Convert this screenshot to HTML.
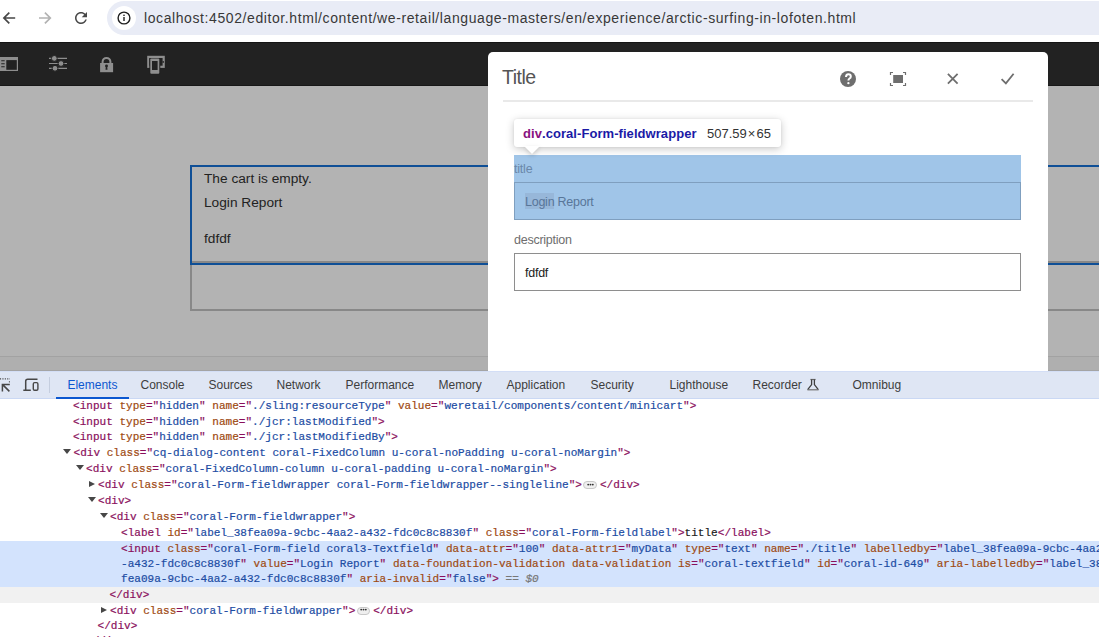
<!DOCTYPE html>
<html><head><meta charset="utf-8">
<style>
*{margin:0;padding:0;box-sizing:border-box}
html,body{width:1099px;height:637px;overflow:hidden;background:#fff;font-family:"Liberation Sans",sans-serif;position:relative}
.abs,svg.i{position:absolute;display:block}
#chrome{left:0;top:0;width:1099px;height:42px;background:#fff}
#pill{left:107px;top:1px;width:1010px;height:34px;border-radius:17px;background:#e9ecf6}
#infoc{left:112px;top:6px;width:24px;height:24px;border-radius:12px;background:#fff}
#url{left:144px;top:10px;font-size:14px;line-height:16px;color:#383838;white-space:nowrap;letter-spacing:0.59px}
#aem{left:0;top:42px;width:1099px;height:44px;background:#222;border-top:1px solid #141414;border-bottom:1px solid #181818}
#page{left:0;top:86px;width:1099px;height:285px;background:#b3b3b3}
#pline{left:0;top:356px;width:1099px;height:15px;background:#afafaf;border-top:1px solid #a2a2a2;border-bottom:1px solid #a4a4a4}
#cmp-gray{left:190px;top:261px;width:1000px;height:50px;border:2px solid #888;border-right:none}
#cmp-blue{left:190px;top:165px;width:1000px;height:100px;border:2px solid #0f4f96;border-right:none}
.ptxt{position:absolute;left:204px;font-size:13.7px;color:#222;white-space:nowrap}
#dialog{left:488px;top:52px;width:560px;height:330px;background:#fff;border-radius:5px 5px 0 0}
#dtitle{left:502px;top:66px;font-size:19.5px;letter-spacing:-0.5px;color:#555;white-space:nowrap}
#ddiv{left:503px;top:100px;width:530px;height:2px;background:#e9e9e9}
#hl{left:514px;top:155px;width:507px;height:65px;background:#a0c5e8}
#lbl1{left:514px;top:161.5px;font-size:12.5px;letter-spacing:-0.2px;color:#6a88aa;white-space:nowrap}
#tf1{left:514px;top:182px;width:507px;height:38px;border:1px solid #7f9fbf}
#sel{left:525px;top:193px;width:29px;height:15.5px;background:#97b7d9}
#tf1t{left:525px;top:194.5px;font-size:12.5px;letter-spacing:-0.25px;color:#587699;white-space:nowrap}
#lbl2{left:514px;top:233px;font-size:12.5px;letter-spacing:-0.25px;color:#6e6e6e;white-space:nowrap}
#tf2{left:514px;top:253px;width:507px;height:38px;border:1px solid #8e8e8e;background:#fff}
#tf2t{left:525px;top:266.3px;font-size:12.5px;letter-spacing:-0.25px;color:#222;white-space:nowrap}
#tip{left:514px;top:119px;width:267px;height:28px;background:#fff;border-radius:3px;box-shadow:0 2px 9px rgba(0,0,0,.22),0 0 2px rgba(0,0,0,.08)}
#tiparrow{left:524px;top:146px;width:0;height:0;border-left:8.5px solid transparent;border-right:8.5px solid transparent;border-top:8.5px solid #fff;filter:drop-shadow(0 2px 2px rgba(0,0,0,.18))}
#tipt{left:523px;top:126px;font-size:13px;font-weight:bold;color:#1a1aa6;white-space:nowrap;letter-spacing:0.06px}
#tipt b{color:#881280}
#tipd{left:707px;top:126px;font-size:13px;color:#333;white-space:nowrap}
#dt-tabs{left:0;top:371px;width:1099px;height:28px;background:#dfe6f4;border-top:1px solid #d3def6;border-bottom:1px solid #cad8f4}
#uline{left:56px;top:397px;width:73px;height:2px;background:#0b57d0}
#sep{left:49px;top:377px;width:1px;height:16px;background:#c5cedf}
.tab{position:absolute;top:378.3px;font-size:12px;line-height:14px;color:#3d3d3d;white-space:nowrap}
#code{left:0;top:399px;width:1099px;height:238px;background:#fff;overflow:hidden}
#selrow{left:0;top:541px;width:1099px;height:46px;background:#d3e3fd}
#hovrow{left:0;top:587px;width:1099px;height:16px;background:#f1f1f1}
.ln{position:absolute;white-space:pre;font-family:"Liberation Mono",monospace;font-size:11.05px;line-height:14px;color:#222;-webkit-text-stroke:0.2px currentColor}
.t{color:#8a0f5c}.a{color:#9e4a12}.v{color:#1c4ca3}.x{color:#222}
.eq{color:#777}.eq i{font-style:italic}
.el{display:inline-block;width:13.4px;height:8px;border:1px solid #c8c8c8;border-radius:4px;background:#efefef;vertical-align:-1.2px;margin:0 3.2px 0 1.3px;position:relative}.el svg{position:absolute;left:-0.8px;top:-1.3px}
.tri{position:absolute;width:0;height:0}
.tri.d{border-left:4px solid transparent;border-right:4px solid transparent;border-top:5.9px solid #474747}
.tri.r{border-top:3.9px solid transparent;border-bottom:3.9px solid transparent;border-left:6px solid #474747}
</style></head><body>
<div id="chrome" class="abs"></div>
<div id="pill" class="abs"></div>
<div id="infoc" class="abs"></div>
<!-- back -->
<svg class="i" style="left:0;top:8px" width="20" height="20" viewBox="0 0 20 20"><path d="M15.2 10H4.2M9.3 4.6L3.9 10l5.4 5.4" fill="none" stroke="#474747" stroke-width="1.7"/></svg>
<svg class="i" style="left:36px;top:8px" width="20" height="20" viewBox="0 0 20 20"><path d="M3 10H14M8.9 4.6L14.3 10l-5.4 5.4" fill="none" stroke="#b2b2b2" stroke-width="1.7"/></svg>
<svg class="i" style="left:72px;top:9px" width="18" height="18" viewBox="0 0 24 24"><path fill="#474747" d="M17.65 6.35C16.2 4.9 14.21 4 12 4c-4.42 0-7.99 3.58-7.99 8s3.57 8 7.99 8c3.73 0 6.84-2.55 7.73-6h-2.08c-.82 2.33-3.04 4-5.65 4-3.31 0-6-2.69-6-6s2.69-6 6-6c1.66 0 3.14.69 4.22 1.78L13 11h7V4l-2.35 2.35z"/></svg>
<svg class="i" style="left:114px;top:8px" width="20" height="20" viewBox="0 0 20 20"><circle cx="10" cy="10" r="5.9" fill="none" stroke="#1f1f1f" stroke-width="1.4"/><rect x="9.3" y="9" width="1.4" height="4" fill="#1f1f1f"/><rect x="9.3" y="6.6" width="1.4" height="1.4" fill="#1f1f1f"/></svg>
<div id="url" class="abs">localhost:4502/editor.html/content/we-retail/language-masters/en/experience/arctic-surfing-in-lofoten.html</div>

<div id="aem" class="abs"></div>
<!-- aem icons -->
<svg class="i" style="left:0;top:56px" width="20" height="16" viewBox="0 0 20 16"><rect x="0" y="1" width="18" height="14" fill="#8e8e8e"/><rect x="6.3" y="4.1" width="10.5" height="9.7" fill="#222"/><rect x="1.1" y="4.2" width="3.7" height="1.1" rx="0.5" fill="#222"/><rect x="1.1" y="7.2" width="3.7" height="1.1" rx="0.5" fill="#222"/><rect x="1.1" y="10.2" width="3.7" height="1.1" rx="0.5" fill="#222"/></svg>
<svg class="i" style="left:48px;top:54px" width="20" height="19" viewBox="0 0 20 19"><g stroke="#8e8e8e" stroke-width="1.2"><path d="M1 4.4H19M1 9.5H19M1 14.3H19"/></g><g fill="#8e8e8e" stroke="#222" stroke-width="1"><circle cx="6.3" cy="4.4" r="2.9"/><circle cx="13" cy="9.5" r="2.9"/><circle cx="7" cy="14.3" r="2.9"/></g></svg>
<svg class="i" style="left:99px;top:56px" width="16" height="17" viewBox="0 0 16 17"><path d="M3.6 7.5V5.8a3.9 3.9 0 0 1 7.8 0V7.5" fill="none" stroke="#8e8e8e" stroke-width="2"/><rect x="1.1" y="7" width="13" height="9.2" fill="#8e8e8e"/><circle cx="7.5" cy="10" r="1.45" fill="#222"/><path d="M6.8 10.5H8.2L8.5 13.7H6.5Z" fill="#222"/></svg>
<svg class="i" style="left:146px;top:55px" width="20" height="20" viewBox="0 0 20 20"><rect x="2.3" y="1.9" width="15.4" height="9.9" fill="none" stroke="#8e8e8e" stroke-width="2.2"/><rect x="16.5" y="6.2" width="1.5" height="1.5" fill="#222"/><rect x="3.3" y="3.2" width="11" height="16" fill="#222"/><rect x="4.3" y="3.5" width="9" height="15.3" rx="1" fill="#8e8e8e"/><rect x="6" y="6" width="5.6" height="9" fill="#222"/></svg>

<div id="page" class="abs"></div>
<div id="pline" class="abs"></div>
<div id="cmp-gray" class="abs"></div>
<div id="cmp-blue" class="abs"></div>
<div class="ptxt" style="top:171px">The cart is empty.</div>
<div class="ptxt" style="top:195px">Login Report</div>
<div class="ptxt" style="top:231px">fdfdf</div>

<div id="dialog" class="abs"></div>
<div id="dtitle" class="abs">Title</div>
<div id="ddiv" class="abs"></div>
<svg class="i" style="left:838px;top:69px" width="20" height="20" viewBox="0 0 20 20"><circle cx="10" cy="10" r="8" fill="#6e6e6e"/><path d="M8 8.1Q8 5.2 10.4 5.2Q12.8 5.2 12.8 7.4Q12.8 8.7 11.5 9.5Q10.4 10.2 10.4 11.6" fill="none" stroke="#fff" stroke-width="2"/><circle cx="10.4" cy="14.2" r="1.15" fill="#fff"/></svg>
<svg class="i" style="left:888px;top:70px" width="20" height="18" viewBox="0 0 20 18"><path d="M2.5 5V2.5H5M15 2.5H17.5V5M17.5 13V15.5H15M5 15.5H2.5V13" fill="none" stroke="#6e6e6e" stroke-width="1.2"/><rect x="5.2" y="5" width="9.8" height="8" fill="#6e6e6e"/></svg>
<svg class="i" style="left:944px;top:70px" width="18" height="18" viewBox="0 0 18 18"><path d="M3.9 3.9L13.6 13.6M13.6 3.9L3.9 13.6" fill="none" stroke="#6e6e6e" stroke-width="1.8"/></svg>
<svg class="i" style="left:998px;top:70px" width="20" height="18" viewBox="0 0 20 18"><path d="M3.6 9.1L7.9 13.3L15.6 3.8" fill="none" stroke="#6e6e6e" stroke-width="1.8"/></svg>

<div id="hl" class="abs"></div>
<div id="lbl1" class="abs">title</div>
<div id="tf1" class="abs"></div>
<div id="sel" class="abs"></div>
<div id="tf1t" class="abs">Login Report</div>
<div id="lbl2" class="abs">description</div>
<div id="tf2" class="abs"></div>
<div id="tf2t" class="abs">fdfdf</div>
<div id="tip" class="abs"></div>
<div id="tiparrow" class="abs"></div>
<div id="tipt" class="abs"><b>div</b>.coral-Form-fieldwrapper</div>
<div id="tipd" class="abs">507.59&#8202;×&#8202;65</div>

<div id="dt-tabs" class="abs"></div>
<svg class="i" style="left:-4px;top:376px" width="18" height="18" viewBox="0 0 18 18"><path d="M4 2.9H14" fill="none" stroke="#474747" stroke-width="1.1" stroke-dasharray="1.1 1.3"/><rect x="12.9" y="5.3" width="1.1" height="1.1" fill="#474747"/><path d="M6.4 15.6V8.4H13.8M6.4 8.4L13.4 15.4" fill="none" stroke="#474747" stroke-width="1.5"/></svg>
<svg class="i" style="left:22px;top:377px" width="18" height="16" viewBox="0 0 18 16"><path d="M3.7 13.2V4.3Q3.7 2.3 5.7 2.3H15.5M1.3 13.2H8.8" fill="none" stroke="#474747" stroke-width="1.5"/><rect x="11.3" y="5.6" width="4.6" height="7.6" rx="1.3" fill="none" stroke="#474747" stroke-width="1.4"/></svg>
<div id="sep" class="abs"></div>
<div class="tab" style="left:67.4px;color:#0b57d0">Elements</div>
<div class="tab" style="left:140.5px">Console</div>
<div class="tab" style="left:208.5px">Sources</div>
<div class="tab" style="left:276.5px">Network</div>
<div class="tab" style="left:345.5px">Performance</div>
<div class="tab" style="left:438.5px">Memory</div>
<div class="tab" style="left:506.5px">Application</div>
<div class="tab" style="left:590.5px">Security</div>
<div class="tab" style="left:669.5px">Lighthouse</div>
<div class="tab" style="left:752.5px">Recorder</div>
<svg class="i" style="left:806px;top:378.2px" width="14" height="13" viewBox="0 0 14 13"><path d="M4.4 1.5H9.6" stroke="#6a6a6a" stroke-width="1.2"/><path d="M5.6 1.5V6.6L1.7 11.6M8.4 1.5V6.6L12.3 11.6" fill="none" stroke="#3f3f3f" stroke-width="1.3"/><path d="M1.4 11.8H12.6" stroke="#707070" stroke-width="1.2"/></svg>
<div class="tab" style="left:852.5px">Omnibug</div>
<div id="uline" class="abs"></div>

<div id="code" class="abs"></div>
<div id="selrow" class="abs"></div>
<div id="hovrow" class="abs"></div>
<div class="ln" style="left:73px;top:398.6px"><span class="t">&lt;input</span> <span class="a">type</span><span class="t">="</span><span class="v">hidden</span><span class="t">"</span> <span class="a">name</span><span class="t">="</span><span class="v">./sling:resourceType</span><span class="t">"</span> <span class="a">value</span><span class="t">="</span><span class="v">weretail/components/content/minicart</span><span class="t">"</span><span class="t">&gt;</span></div>
<div class="ln" style="left:73px;top:414.6px"><span class="t">&lt;input</span> <span class="a">type</span><span class="t">="</span><span class="v">hidden</span><span class="t">"</span> <span class="a">name</span><span class="t">="</span><span class="v">./jcr:lastModified</span><span class="t">"</span><span class="t">&gt;</span></div>
<div class="ln" style="left:73px;top:430.1px"><span class="t">&lt;input</span> <span class="a">type</span><span class="t">="</span><span class="v">hidden</span><span class="t">"</span> <span class="a">name</span><span class="t">="</span><span class="v">./jcr:lastModifiedBy</span><span class="t">"</span><span class="t">&gt;</span></div>
<div class="tri d" style="left:63.2px;top:448.9px"></div><div class="ln" style="left:73.5px;top:445.9px"><span class="t">&lt;div</span> <span class="a">class</span><span class="t">="</span><span class="v">cq-dialog-content coral-FixedColumn u-coral-noPadding u-coral-noMargin</span><span class="t">"</span><span class="t">&gt;</span></div>
<div class="tri d" style="left:75.7px;top:464.7px"></div><div class="ln" style="left:86px;top:461.7px"><span class="t">&lt;div</span> <span class="a">class</span><span class="t">="</span><span class="v">coral-FixedColumn-column u-coral-padding u-coral-noMargin</span><span class="t">"</span><span class="t">&gt;</span></div>
<div class="tri r" style="left:88.7px;top:481.2px"></div><div class="ln" style="left:98px;top:478.2px"><span class="t">&lt;div</span> <span class="a">class</span><span class="t">="</span><span class="v">coral-Form-fieldwrapper coral-Form-fieldwrapper--singleline</span><span class="t">"</span><span class="t">&gt;</span><span class="el"><svg width="13" height="8" viewBox="0 0 13 8"><circle cx="4.2" cy="3.6" r="0.95" fill="#333"/><circle cx="6.5" cy="3.6" r="0.95" fill="#333"/><circle cx="8.8" cy="3.6" r="0.95" fill="#333"/></svg></span><span class="t">&lt;/div&gt;</span></div>
<div class="tri d" style="left:87.7px;top:497.0px"></div><div class="ln" style="left:98px;top:494.0px"><span class="t">&lt;div&gt;</span></div>
<div class="tri d" style="left:99.7px;top:512.7px"></div><div class="ln" style="left:110px;top:509.7px"><span class="t">&lt;div</span> <span class="a">class</span><span class="t">="</span><span class="v">coral-Form-fieldwrapper</span><span class="t">"</span><span class="t">&gt;</span></div>
<div class="ln" style="left:121px;top:525.5px"><span class="t">&lt;label</span> <span class="a">id</span><span class="t">="</span><span class="v">label_38fea09a-9cbc-4aa2-a432-fdc0c8c8830f</span><span class="t">"</span> <span class="a">class</span><span class="t">="</span><span class="v">coral-Form-fieldlabel</span><span class="t">"</span><span class="t">&gt;</span><span class="x">title</span><span class="t">&lt;/label&gt;</span></div>
<div class="ln" style="left:121px;top:542.1px"><span class="t">&lt;input</span> <span class="a">class</span><span class="t">="</span><span class="v">coral-Form-field coral3-Textfield</span><span class="t">"</span> <span class="a">data-attr</span><span class="t">="</span><span class="v">100</span><span class="t">"</span> <span class="a">data-attr1</span><span class="t">="</span><span class="v">myData</span><span class="t">"</span> <span class="a">type</span><span class="t">="</span><span class="v">text</span><span class="t">"</span> <span class="a">name</span><span class="t">="</span><span class="v">./title</span><span class="t">"</span> <span class="a">labelledby</span><span class="t">="</span><span class="v">label_38fea09a-9cbc-4aa2</span></div>
<div class="ln" style="left:121px;top:557.4px"><span class="v">-a432-fdc0c8c8830f</span><span class="t">"</span> <span class="a">value</span><span class="t">="</span><span class="v">Login Report</span><span class="t">"</span> <span class="a">data-foundation-validation</span> <span class="a">data-validation</span> <span class="a">is</span><span class="t">="</span><span class="v">coral-textfield</span><span class="t">"</span> <span class="a">id</span><span class="t">="</span><span class="v">coral-id-649</span><span class="t">"</span> <span class="a">aria-labelledby</span><span class="t">="</span><span class="v">label_38</span></div>
<div class="ln" style="left:121px;top:572.2px"><span class="v">fea09a-9cbc-4aa2-a432-fdc0c8c8830f</span><span class="t">"</span> <span class="a">aria-invalid</span><span class="t">="</span><span class="v">false</span><span class="t">"</span><span class="t">&gt;</span> <span class="eq">== <i>$0</i></span></div>
<div class="ln" style="left:109.5px;top:587.6px"><span class="t">&lt;/div&gt;</span></div>
<div class="tri r" style="left:100.7px;top:606.6px"></div><div class="ln" style="left:110px;top:603.6px"><span class="t">&lt;div</span> <span class="a">class</span><span class="t">="</span><span class="v">coral-Form-fieldwrapper</span><span class="t">"</span><span class="t">&gt;</span><span class="el"><svg width="13" height="8" viewBox="0 0 13 8"><circle cx="4.2" cy="3.6" r="0.95" fill="#333"/><circle cx="6.5" cy="3.6" r="0.95" fill="#333"/><circle cx="8.8" cy="3.6" r="0.95" fill="#333"/></svg></span><span class="t">&lt;/div&gt;</span></div>
<div class="ln" style="left:97.5px;top:618.8px"><span class="t">&lt;/div&gt;</span></div>
<div class="ln" style="left:86px;top:633.9px"><span class="t">&lt;/div&gt;</span></div>
</body></html>
